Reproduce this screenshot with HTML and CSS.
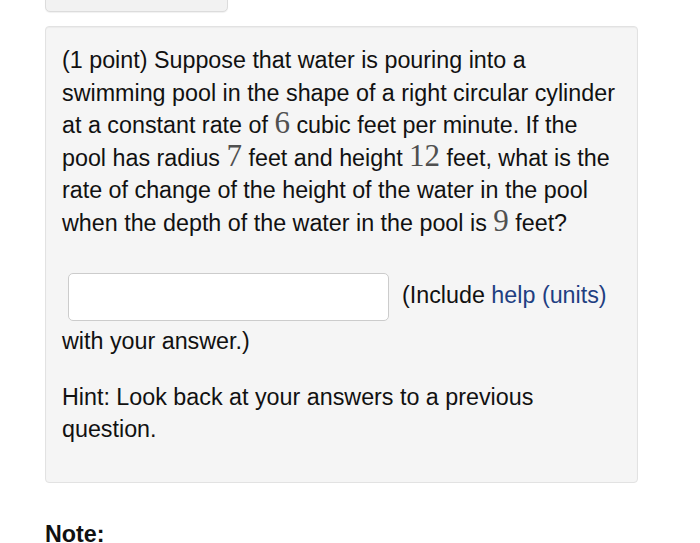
FILE: index.html
```html
<!DOCTYPE html>
<html>
<head>
<meta charset="utf-8">
<link rel="stylesheet" href="styles.css">
</head>
<body>
<div class="tab"></div>
<div class="problem">
  <p class="question">(1 point) Suppose that water is pouring into a swimming pool in the shape of a right circular cylinder at a constant rate of <span class="math">6</span> cubic feet per minute. If the pool has radius <span class="math">7</span> feet and height <span class="math">12</span> feet, what is the rate of change of the height of the water in the pool when the depth of the water in the pool is <span class="math">9</span> feet?</p>
  <p class="answer"><input class="answer-input" type="text">(Include <a class="link" href="#">help (units)</a> with your answer.)</p>
  <p class="hint">Hint: Look back at your answers to a previous question.</p>
</div>
<div class="note">Note:</div>
</body>
</html>
```
FILE: styles.css
```css
html, body {
  margin: 0;
  padding: 0;
  background: #ffffff;
}
body {
  font-family: "Liberation Sans", Arial, sans-serif;
  font-size: 23.3px;
  color: #111;
  overflow: hidden;
}
.tab {
  margin: -9px 0 0 45px;
  width: 181px;
  height: 19px;
  background: #f2f2f2;
  border: 1px solid #dcdcdc;
  border-radius: 5px;
  box-shadow: 0 1px 1px rgba(0,0,0,0.06);
}
.problem {
  margin: 14px 0 0 45px;
  width: 558px;
  height: 438px;
  padding: 17px 17px 0 16px;
  background: #f5f5f5;
  border: 1px solid #e2e2e2;
  border-radius: 4px;
  box-shadow: inset 0 1px 1px rgba(0,0,0,0.04);
}
.problem p {
  margin: 0;
  line-height: 32.5px;
}
.math {
  font-family: "Liberation Serif", "Times New Roman", serif;
  font-size: 31px;
  color: #505050;
  line-height: 0;
}
.answer {
  margin-top: 30px !important;
}
.answer-input {
  vertical-align: middle;
  width: 321px;
  height: 48px;
  box-sizing: border-box;
  margin: 4px 13px 4px 6px;
  border: 1px solid #cccccc;
  border-radius: 5px;
  background: #ffffff;
  padding: 0 8px;
  font-size: 18px;
}
.link {
  color: #1f3f82;
  text-decoration: none;
}
.hint {
  margin-top: 23px !important;
}
.note {
  margin: 35px 0 0 45px;
  font-weight: bold;
  line-height: 32px;
  color: #111;
}
```
